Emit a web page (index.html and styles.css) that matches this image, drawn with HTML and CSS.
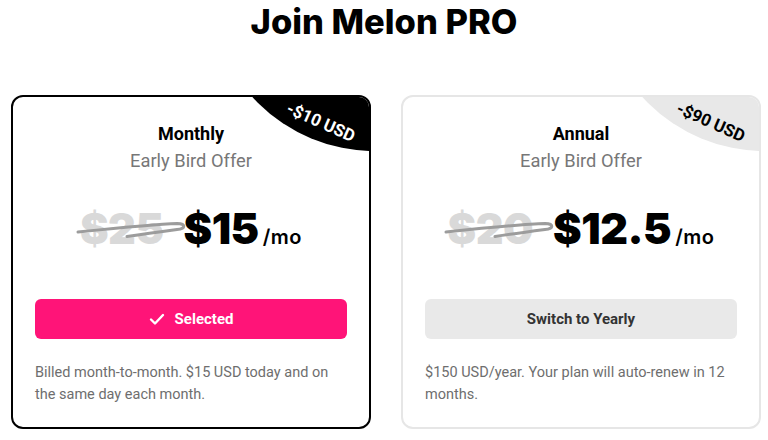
FILE: index.html
```html
<!DOCTYPE html>
<html lang="en">
<head>
<meta charset="utf-8">
<title>Join Melon PRO</title>
<link rel="stylesheet" href="styles.css">
</head>
<body>
<main class="page">
  <h1 class="title">Join Melon PRO</h1>
  <div class="plans">
    <section class="plan plan--active">
      <div class="badge"></div>
      <span class="badge-text">-$10 USD</span>
      <h2 class="plan-name">Monthly</h2>
      <p class="plan-sub">Early Bird Offer</p>
      <div class="price">
        <span class="old">$25<svg class="scribble" viewBox="0 0 112 22" width="112" height="22"><path d="M1 13 C 40 9, 80 5, 100 4.5 C 109 4.5, 109 10, 100 10.5 C 85 12.5, 70 14.5, 50 17.5" /></svg></span>
        <span class="new">$15</span><span class="per">/mo</span>
      </div>
      <button class="btn btn--primary"><svg class="check" viewBox="0 0 16 16" width="16" height="16"><path d="M2 8.5 L6 12.5 L14 4" /></svg>Selected</button>
      <p class="note">Billed month-to-month. $15 USD today and on the same day each month.</p>
    </section>
    <section class="plan">
      <div class="badge badge--light"></div>
      <span class="badge-text badge-text--dark">-$90 USD</span>
      <h2 class="plan-name">Annual</h2>
      <p class="plan-sub">Early Bird Offer</p>
      <div class="price">
        <span class="old">$20<svg class="scribble" viewBox="0 0 112 22" width="112" height="22"><path d="M1 13 C 40 9, 80 5, 100 4.5 C 109 4.5, 109 10, 100 10.5 C 85 12.5, 70 14.5, 50 17.5" /></svg></span>
        <span class="new">$12.5</span><span class="per">/mo</span>
      </div>
      <button class="btn btn--secondary">Switch to Yearly</button>
      <p class="note">$150 USD/year. Your plan will auto-renew in 12 months.</p>
    </section>
  </div>
</main>
</body>
</html>
```
FILE: styles.css
```css
* { box-sizing: border-box; }
body {
  margin: 0;
  background: #fff;
  font-family: Roboto, "Liberation Sans", sans-serif;
  color: #000;
}
.page { width: 768px; }
.title {
  margin: 0;
  padding-top: 1px;
  height: 95px;
  text-align: center;
  font-family: Inter, "Liberation Sans", sans-serif;
  font-weight: 800;
  font-size: 34.5px;
  line-height: 42px;
  letter-spacing: 0;
}
.plans {
  display: grid;
  grid-template-columns: 360px 360px;
  gap: 30px;
  padding-left: 11px;
}
.plan {
  position: relative;
  overflow: hidden;
  height: 334px;
  border: 2px solid #000;
  border-radius: 12px;
  padding: 26px 22px 22px;
  text-align: center;
  background: #fff;
}
.plan:not(.plan--active) { border-color: #e6e6e6; }
.badge {
  position: absolute;
  left: 197px;
  top: -274px;
  width: 328px;
  height: 328px;
  border-radius: 50%;
  background: #000;
}
.badge--light { background: #e8e8e8; }
.badge-text {
  position: absolute;
  left: 308px;
  top: 25px;
  transform: translate(-50%, -50%) rotate(24deg);
  white-space: nowrap;
  color: #fff;
  font-weight: 700;
  font-size: 17px;
  line-height: 20px;
}
.badge-text--dark { color: #000; }
.plan-name {
  margin: 0;
  font-size: 18px;
  line-height: 21px;
  font-weight: 700;
}
.plan-sub {
  margin: 6px 0 0;
  font-size: 18.3px;
  line-height: 22px;
  color: #777;
}
.price {
  margin-top: 35px;
  height: 42px;
  display: flex;
  justify-content: center;
  align-items: baseline;
  font-family: Inter, "Liberation Sans", sans-serif;
  font-weight: 900;
  font-size: 43px;
  line-height: 42px;
  letter-spacing: -0.5px;
}
.old {
  position: relative;
  color: #d9d9d9;
  margin-right: 20px;
}
.scribble {
  position: absolute;
  left: -3px;
  top: 12px;
  overflow: visible;
}
.scribble path {
  fill: none;
  stroke: #9c9c9c;
  stroke-width: 3;
  stroke-linecap: round;
}
.new { color: #000; }
.per {
  margin-left: 4px;
  font-size: 20px;
  font-weight: 600;
  letter-spacing: 0.5px;
}
.btn {
  display: flex;
  align-items: center;
  justify-content: center;
  gap: 10px;
  width: 100%;
  height: 40px;
  margin-top: 50px;
  border: 0;
  border-radius: 6px;
  font-family: Roboto, "Liberation Sans", sans-serif;
  font-weight: 700;
  font-size: 15px;
}
.btn--primary { background: #ff1478; color: #fff; }
.btn--secondary { background: #e9e9e9; color: #333; }
.check path {
  fill: none;
  stroke: #fff;
  stroke-width: 2.4;
  stroke-linecap: round;
  stroke-linejoin: round;
}
.note {
  margin: 23px 0 0;
  text-align: left;
  font-size: 14.5px;
  line-height: 22px;
  color: #6e6e6e;
}
```
